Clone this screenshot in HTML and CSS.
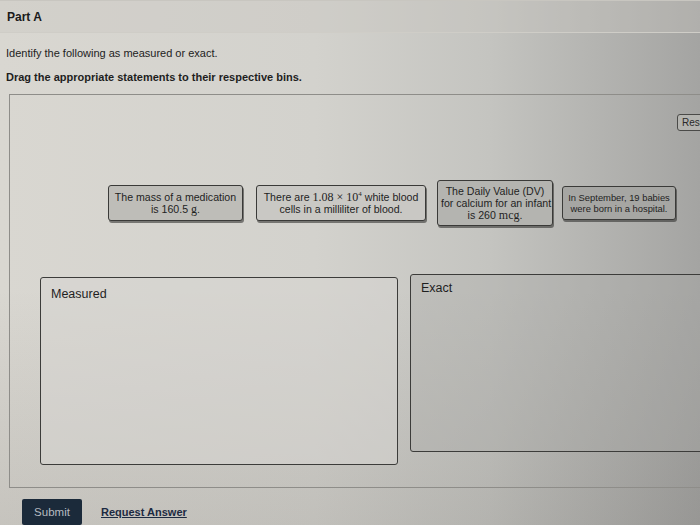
FILE: index.html
```html
<!DOCTYPE html>
<html>
<head>
<meta charset="utf-8">
<link rel="stylesheet" href="styles.css">
</head>
<body>
<div class="page">
  <header class="part">Part A</header>
  <p class="intro">Identify the following as measured or exact.</p>
  <p class="instr">Drag the appropriate statements to their respective bins.</p>
  <section class="panel">
    <div class="toolbar"><button class="reset">Reset</button></div>
    <div class="cards">
      <div class="card c1">The mass of a medication<br>is 160.5 <span class="m">g</span>.</div>
      <div class="card c2">There are <span class="m">1.08 × 10<sup>4</sup></span> white blood<br>cells in a milliliter of blood.</div>
      <div class="card c3">The Daily Value (DV)<br>for calcium for an infant<br>is 260 <span class="m">mcg</span>.</div>
      <div class="card c4">In September, 19 babies<br>were born in a hospital.</div>
    </div>
    <div class="bins">
      <div class="bin measured"><span class="label">Measured</span></div>
      <div class="bin exact"><span class="label">Exact</span></div>
    </div>
  </section>
  <footer class="actions">
    <button class="submit">Submit</button>
    <a class="request" href="#">Request Answer</a>
  </footer>
</div>
</body>
</html>
```
FILE: styles.css
```css
html, body {
  margin: 0;
  padding: 0;
  width: 700px;
  height: 525px;
  overflow: hidden;
}
body {
  font-family: "Liberation Sans", Arial, sans-serif;
  color: #1e1e1e;
  background:
    linear-gradient(to bottom, rgba(0,0,0,0) 0%, rgba(0,0,0,0) 55%, rgba(60,55,50,0.12) 100%),
    linear-gradient(to right, #d9d7d1 0%, #d3d2cd 45%, #c4c4c0 70%, #a4a4a2 100%);
}
.page {
  width: 760px;
  height: 525px;
  display: flex;
  flex-direction: column;
}
.part {
  height: 33px;
  box-sizing: border-box;
  padding: 9px 0 0 7px;
  font-size: 12px;
  font-weight: bold;
  color: #1a1a1a;
  border-top: 1px solid #c8c6c0;
  background: rgba(200, 198, 192, 0.35);
  border-bottom: 1px solid #cfcdc7;
}
.intro {
  margin: 14px 0 0 6px;
  font-size: 11px;
  color: #222;
}
.instr {
  margin: 12px 0 0 6px;
  font-size: 11px;
  font-weight: bold;
  color: #1e1e1e;
}
.panel {
  margin: 11px 0 0 9px;
  height: 396px;
  box-sizing: border-box;
  border: 1px solid #8e8d89;
  border-right: none;
  display: flex;
  flex-direction: column;
}
.toolbar {
  display: flex;
  padding: 19px 0 0 667px;
}
.reset {
  font-family: "Liberation Sans", Arial, sans-serif;
  font-size: 10px;
  color: #2a2a2a;
  background: #b4b4b0;
  border: 1px solid #4a4a48;
  border-radius: 3px;
  padding: 2px 4px;
}
.cards {
  display: flex;
  align-items: center;
  gap: 11px;
  padding: 49px 0 0 98px;
}
.card {
  font-size: 10.6px;
  line-height: 12px;
  text-align: center;
  white-space: nowrap;
  color: #1f1f1f;
  border: 1px solid #3a3a38;
  border-radius: 3px;
  box-shadow: 1px 2px 0 rgba(40,40,38,0.55);
  padding: 5px 3px;
}
.card .m {
  font-family: "Liberation Serif", "Times New Roman", serif;
  font-size: 12px;
}
.card sup {
  font-size: 7px;
  line-height: 0;
}
.c1 { width: 127px; background: #bebdb8; }
.c2 { width: 162px; background: #c9c8c4; margin-left: 2px; }
.c3 { width: 108px; background: #b4b4b0; padding: 4px 3px; }
.c4 { width: 106px; background: #a6a6a3; font-size: 9.4px; line-height: 11px; margin-left: -2px; }
.bins {
  display: grid;
  grid-template-columns: 358px 300px;
  gap: 12px;
  padding: 48px 0 0 30px;
  align-items: start;
}
.bin {
  border: 1px solid #3c3c3a;
  border-radius: 3px;
  box-sizing: border-box;
  padding: 9px 10px;
  font-size: 12.5px;
  color: #1f1f1f;
}
.measured {
  height: 188px;
  margin-top: 3px;
  background: rgba(215, 214, 210, 0.55);
}
.exact {
  height: 178px;
  background: rgba(170, 170, 167, 0.35);
  padding-top: 6px;
}
.actions {
  display: flex;
  align-items: center;
  gap: 19px;
  padding: 11px 0 0 22px;
}
.submit {
  font-family: "Liberation Sans", Arial, sans-serif;
  font-size: 11.5px;
  color: #b6bbc0;
  background: #1b2a3a;
  border: none;
  border-radius: 2px;
  width: 60px;
  height: 26px;
}
.request {
  font-size: 11px;
  font-weight: bold;
  color: #1c2a42;
  text-decoration: underline;
}
```
